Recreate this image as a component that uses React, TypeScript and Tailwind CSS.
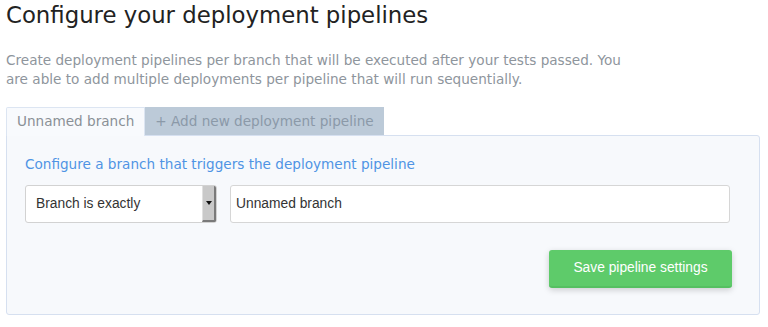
import React from 'react'

const App = () => {
  return (
    <div className="w-[768px] h-[327px] bg-white font-['DejaVu_Sans',sans-serif] px-[6px]">
      <h1 className="text-[22.8px] leading-[30px] text-[#222]">Configure your deployment pipelines</h1>
      <p className="mt-[21px] max-w-[630px] text-[13.6px] leading-[19px] text-[#8e959c]">
        Create deployment pipelines per branch that will be executed after your tests passed. You are able to add
        multiple deployments per pipeline that will run sequentially.
      </p>

      <div className="mt-[18px] flex">
        <div className="h-[29px] px-[10px] flex items-center text-[13.6px] text-[#8a9096] bg-[#f8fafd] border border-b-0 border-[#dce5f2] rounded-tl-[2px] relative z-10 -mb-px pb-px">
          Unnamed branch
        </div>
        <div className="h-[28px] px-[10px] flex items-center text-[13.6px] text-[#8b99a8] bg-[#bccad8]">
          + Add new deployment pipeline
        </div>
      </div>

      <div className="w-[754px] h-[180px] bg-[#f7f9fc] border border-[#d6e0f0] rounded-b-[3px] rounded-tr-[3px] px-[18px] pt-[18px]">
        <div className="text-[13.6px] leading-[20px] text-[#4f94e4]">Configure a branch that triggers the deployment pipeline</div>

        <div className="mt-[11px] flex gap-[13px]">
          <div className="w-[192px] h-[38px] bg-white border border-[#d2d2d2] rounded-[3px] flex items-stretch overflow-hidden">
            <div className="flex-1 flex items-center pl-[10px] font-['Liberation_Sans',sans-serif] text-[13.8px] text-[#333]">
              Branch is exactly
            </div>
            <div className="w-[14px] bg-[#c9c9c9] border-r-2 border-b-2 border-[#7a7a7a] border-l border-l-[#e0e0e0] flex items-center justify-center">
              <svg width="6" height="4" viewBox="0 0 6 4">
                <path d="M0 0h6L3 4z" fill="#111" />
              </svg>
            </div>
          </div>
          <div className="w-[500px] h-[38px] bg-white border border-[#d6d6d6] rounded-[3px] flex items-center pl-[5px] font-['Liberation_Sans',sans-serif] text-[13.8px] text-[#333]">
            Unnamed branch
          </div>
        </div>

        <div className="mt-[27px] flex justify-end pr-[9px]">
          <button className="w-[183px] h-[38px] bg-[#5ecb6a] border-b-2 border-[#55c061] rounded-[3px] shadow-[0_2px_6px_rgba(0,0,0,0.18)] text-white font-['Liberation_Sans',sans-serif] text-[13.8px]">
            Save pipeline settings
          </button>
        </div>
      </div>
    </div>
  )
}

export default App
